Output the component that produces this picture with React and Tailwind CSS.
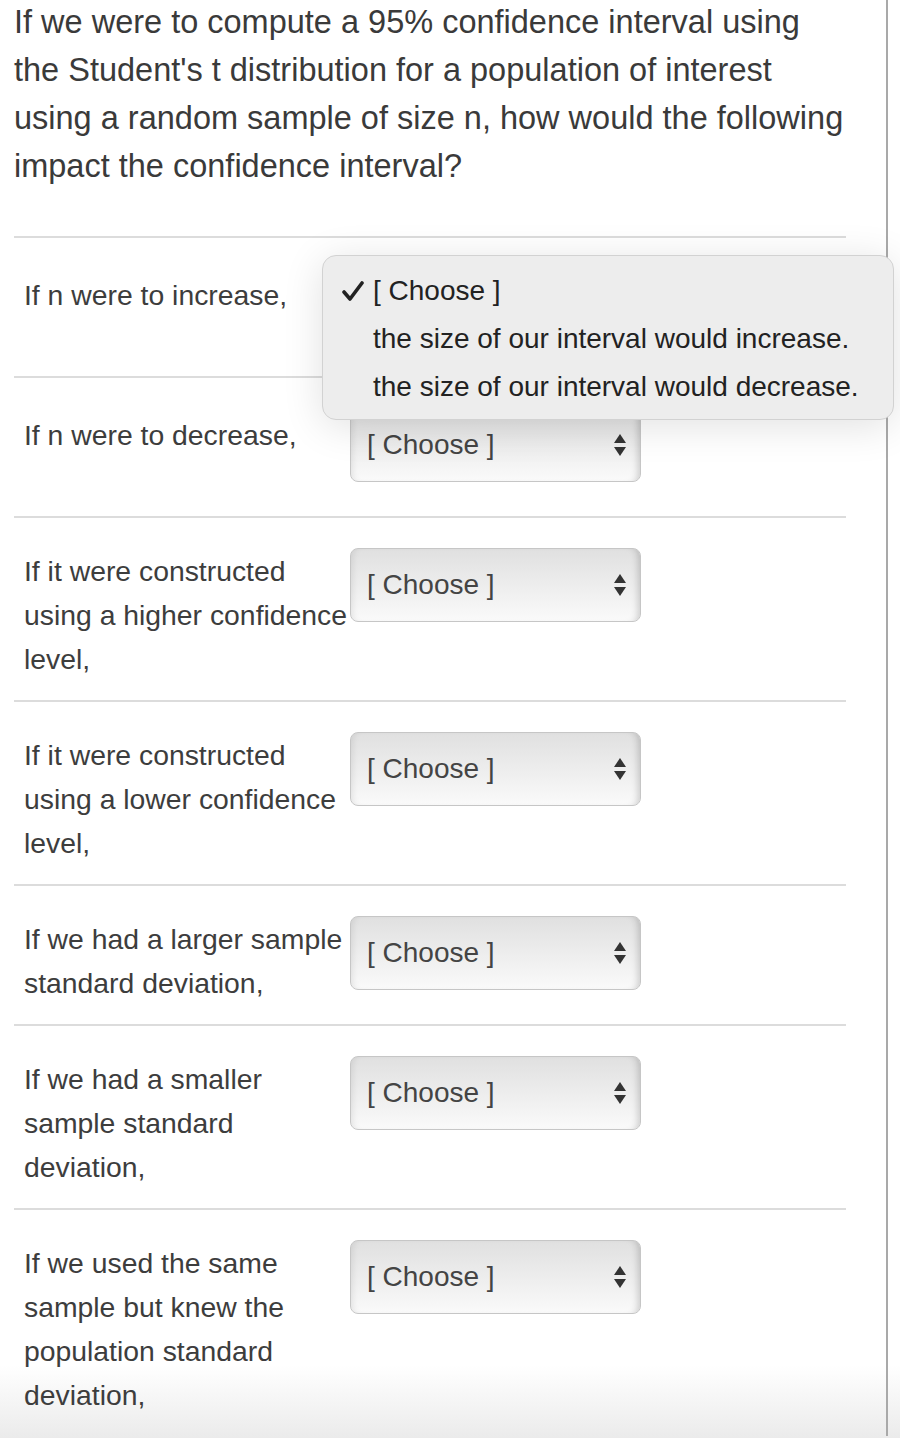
import React from "react";

const rows = [
  { lines: ["If n were to increase,"], single: true, hidden: true },
  { lines: ["If n were to decrease,"], single: true },
  { lines: ["If it were constructed", "using a higher confidence", "level,"] },
  { lines: ["If it were constructed", "using a lower confidence", "level,"] },
  { lines: ["If we had a larger sample", "standard deviation,"] },
  { lines: ["If we had a smaller", "sample standard", "deviation,"] },
  { lines: ["If we used the same", "sample but knew the", "population standard", "deviation,"] },
];

function Arrows() {
  return (
    <svg width="12" height="24" viewBox="0 0 12 24" className="shrink-0">
      <polygon points="0,10 6,1 12,10" fill="#333" />
      <polygon points="0,14 12,14 6,23" fill="#333" />
    </svg>
  );
}

function Select({ hidden }) {
  return (
    <div
      className={
        "w-[291px] h-[74px] mb-[15px] shrink-0 rounded-[8px] border-[1.5px] border-[#c6c6c6] bg-gradient-to-b from-[#e0e0e0] to-[#fafafa] shadow-[inset_-7px_0_7px_-5px_rgba(0,0,0,0.18),inset_7px_0_7px_-6px_rgba(0,0,0,0.1)] flex items-center justify-between pl-[16px] pr-[14px] " +
        (hidden ? "invisible" : "")
      }
    >
      <span className="text-[28px] leading-[32px] text-[#444]">[ Choose ]</span>
      <Arrows />
    </div>
  );
}

export default function App() {
  return (
    <div className="relative w-[900px] h-[1438px] overflow-hidden bg-[linear-gradient(to_bottom,#ffffff_1365px,#ebebeb_1438px)] font-['Liberation_Sans',Arial,sans-serif]">
      <div className="w-[888px] h-full border-r-2 border-[#a9a9a9]">
        <div className="pl-[14px] w-[846px]">
          <p className="-mt-[2px] text-[32.5px] leading-[48px] text-[#3a3a3a] whitespace-nowrap">
            <span className="block">If we were to compute a 95% confidence interval using</span>
            <span className="block">the Student's t distribution for a population of interest</span>
            <span className="block">using a random sample of size n, how would the following</span>
            <span className="block">impact the confidence interval?</span>
          </p>
          <div className="mt-[46px]">
            {rows.map((r, i) => (
              <div key={i} className="flex items-start border-t-2 border-[#dcdcdc] pt-[30px] pb-[19px]">
                <div
                  className={
                    "w-[336px] shrink-0 pl-[10px] text-[28.35px] leading-[44px] text-[#3d3d3d] whitespace-nowrap " +
                    (r.single ? "mt-[5px]" : "mt-[1px]")
                  }
                >
                  {r.lines.map((l, j) => (
                    <span key={j} className="block">{l}</span>
                  ))}
                </div>
                <Select hidden={r.hidden} />
              </div>
            ))}
          </div>
        </div>
      </div>

      <div className="absolute left-[322px] top-[255px] w-[572px] h-[165px] rounded-[14px] bg-[#ededed] border border-[#d2d2d2] shadow-[0_6px_40px_rgba(0,0,0,0.12)] pt-[11px]">
        <div className="flex items-center h-[48px]">
          <svg width="22" height="20" viewBox="0 0 22 20" className="ml-[19px] mr-[9px]">
            <polyline points="2,11 8,18 20,2" fill="none" stroke="#222" strokeWidth="3.6" strokeLinecap="round" strokeLinejoin="round" />
          </svg>
          <span className="text-[28px] leading-[48px] text-[#222]">[ Choose ]</span>
        </div>
        <div className="pl-[50px] text-[28px] leading-[48px] text-[#222]">the size of our interval would increase.</div>
        <div className="pl-[50px] text-[28px] leading-[48px] text-[#222]">the size of our interval would decrease.</div>
      </div>
    </div>
  );
}
